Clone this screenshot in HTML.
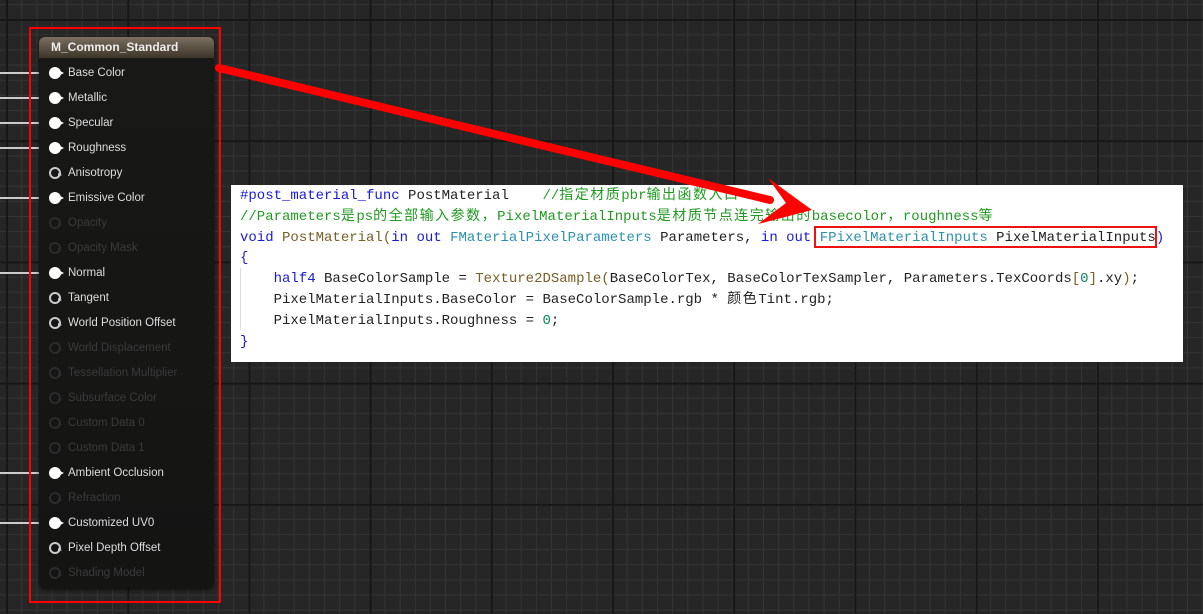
<!DOCTYPE html>
<html><head><meta charset="utf-8"><style>
*{margin:0;padding:0;box-sizing:border-box}
body{width:1203px;height:614px;overflow:hidden;position:relative;background-color:#262626;
background-image:
linear-gradient(90deg,#171717 2px,transparent 2px),
linear-gradient(180deg,#171717 2px,transparent 2px),
linear-gradient(90deg,#343434 1px,transparent 1px),
linear-gradient(180deg,#343434 1px,transparent 1px);
background-size:121.2px 121.2px,121.2px 121.2px,15.15px 15.15px,15.15px 15.15px;
background-position:6px 0,0 19px,6px 0,0 4px;
font-family:"Liberation Sans",sans-serif}
.node{position:absolute;left:39px;top:37px;width:175px;height:551px;background:linear-gradient(#181816,#141413);border-radius:6px;box-shadow:0 2px 4px rgba(0,0,0,.6)}
.hdr{height:21px;border-radius:6px 6px 0 0;background:linear-gradient(#7a6f60,#3d3529);color:#eee;font-weight:bold;font-size:12px;padding:3px 0 0 12px}
.row{position:absolute;left:10px;height:20px;font-size:11.5px;color:#ddd;display:flex;align-items:center}
.row i{display:inline-block;width:12px;height:12px;border-radius:50%;background:#fff;margin-right:7px;position:relative}
.row i::after{content:"";position:absolute;right:-3px;top:3.5px;border-left:4px solid #fff;border-top:2.5px solid transparent;border-bottom:2.5px solid transparent}
.row.o i{background:transparent;border:2px solid #ccc}
.row.o i::after{border-left-color:#ccc}
.row.d{color:#3a3a3a}
.row.d i{background:transparent;border:2px solid #2c2c2c}
.row.d i::after{border-left-color:#2c2c2c}
.wire{position:absolute;left:0;height:2px;width:45px;background:#ccc}
.red{position:absolute;left:29px;top:27px;width:192px;height:576px;border:2px solid #f00}
.code{position:absolute;left:231px;top:185px;width:952px;height:177px;background:#fff;font-family:"Liberation Mono","Noto Sans CJK SC",monospace;font-size:14px;line-height:20.8px;padding:1px 0 0 9px;white-space:pre;color:#222}
.z{letter-spacing:1.5px}
.k{color:#1a1adb}.c{color:#1f9a1f}.t{color:#2b91af}.f{color:#795e26}.n{color:#098658}
.box{position:absolute;left:814px;top:226px;width:343px;height:22px;border:2px solid #e11}
.bar{position:absolute;left:240px;top:268px;width:1px;height:62px;background:#ddd}
</style></head><body>
<div class="wire" style="top:72px"></div><div class="wire" style="top:97px"></div><div class="wire" style="top:122px"></div><div class="wire" style="top:147px"></div><div class="wire" style="top:197px"></div><div class="wire" style="top:272px"></div><div class="wire" style="top:472px"></div><div class="wire" style="top:522px"></div>
<div class="node"><div class="hdr">M_Common_Standard</div>
<div class="row" style="top:26px"><i></i>Base Color</div>
<div class="row" style="top:51px"><i></i>Metallic</div>
<div class="row" style="top:76px"><i></i>Specular</div>
<div class="row" style="top:101px"><i></i>Roughness</div>
<div class="row o" style="top:126px"><i></i>Anisotropy</div>
<div class="row" style="top:151px"><i></i>Emissive Color</div>
<div class="row d" style="top:176px"><i></i>Opacity</div>
<div class="row d" style="top:201px"><i></i>Opacity Mask</div>
<div class="row" style="top:226px"><i></i>Normal</div>
<div class="row o" style="top:251px"><i></i>Tangent</div>
<div class="row o" style="top:276px"><i></i>World Position Offset</div>
<div class="row d" style="top:301px"><i></i>World Displacement</div>
<div class="row d" style="top:326px"><i></i>Tessellation Multiplier</div>
<div class="row d" style="top:351px"><i></i>Subsurface Color</div>
<div class="row d" style="top:376px"><i></i>Custom Data 0</div>
<div class="row d" style="top:401px"><i></i>Custom Data 1</div>
<div class="row" style="top:426px"><i></i>Ambient Occlusion</div>
<div class="row d" style="top:451px"><i></i>Refraction</div>
<div class="row" style="top:476px"><i></i>Customized UV0</div>
<div class="row o" style="top:501px"><i></i>Pixel Depth Offset</div>
<div class="row d" style="top:526px"><i></i>Shading Model</div>
</div>
<div class="red"></div>
<div class="code"><span class="k">#post_material_func</span> PostMaterial    <span class="c">//<span class="z">指定材质</span>pbr<span class="z">输出函数入口</span></span>
<span class="c">//Parameters<span class="z">是</span>ps<span class="z">的全部输入参数，</span>PixelMaterialInputs<span class="z">是材质节点连完输出的</span>basecolor<span class="z">，</span>roughness<span class="z">等</span></span>
<span class="k">void</span> <span class="f">PostMaterial(</span><span class="k">in out</span> <span class="t">FMaterialPixelParameters</span> Parameters, <span class="k">in out</span> <span class="t">FPixelMaterialInputs</span> PixelMaterialInputs<span class="k">)</span>
<span class="k">{</span>
    <span class="k">half4</span> BaseColorSample = <span class="f">Texture2DSample(</span>BaseColorTex, BaseColorTexSampler, Parameters.TexCoords<span class="f">[</span><span class="n">0</span><span class="f">]</span>.xy<span class="f">)</span>;
    PixelMaterialInputs.BaseColor = BaseColorSample.rgb * <span class="z">颜色</span>Tint.rgb;
    PixelMaterialInputs.Roughness = <span class="n">0</span>;
<span class="k">}</span></div>
<div class="bar"></div>
<div class="box"></div>
<svg style="position:absolute;left:0;top:0" width="1203" height="614">
<line x1="219" y1="68" x2="770" y2="200" stroke="#f00" stroke-width="8" stroke-linecap="round"/>
<polygon points="812,210 758,224 786,203 768,178" fill="#f00"/>
</svg>
</body></html>
